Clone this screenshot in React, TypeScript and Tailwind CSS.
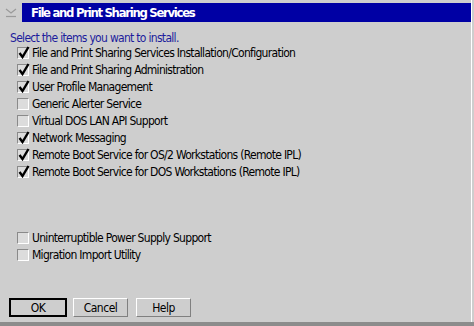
import React from "react";

const items: { label: string; checked: boolean }[] = [
  { label: "File and Print Sharing Services Installation/Configuration", checked: true },
  { label: "File and Print Sharing Administration", checked: true },
  { label: "User Profile Management", checked: true },
  { label: "Generic Alerter Service", checked: false },
  { label: "Virtual DOS LAN API Support", checked: false },
  { label: "Network Messaging", checked: true },
  { label: "Remote Boot Service for OS/2 Workstations (Remote IPL)", checked: true },
  { label: "Remote Boot Service for DOS Workstations (Remote IPL)", checked: true },
];

const items2 = [
  { label: "Uninterruptible Power Supply Support", checked: false },
  { label: "Migration Import Utility", checked: false },
];

function Check({ checked }: { checked: boolean }) {
  return (
    <div className="relative w-[12px] h-[12px] border-t border-l border-[#8a8a8a] border-b border-r border-b-white border-r-white bg-[#dcdcdc] shrink-0">
      {checked && (
        <svg className="absolute left-[0px] top-[-2px]" width="12" height="13" viewBox="0 0 12 13">
          <path d="M1.5 7 L4.5 11 L10.5 1" stroke="#000" strokeWidth="2.4" fill="none" />
        </svg>
      )}
    </div>
  );
}

function Row({ label, checked }: { label: string; checked: boolean }) {
  return (
    <div className="flex items-center h-[17px] pl-[17px] gap-[3px]">
      <Check checked={checked} />
      <span className="text-[12px] leading-none text-black tracking-[-0.7px]">{label}</span>
    </div>
  );
}

function Btn({ label, def }: { label: string; def?: boolean }) {
  return (
    <div
      className={
        "h-[19px] flex items-center justify-center text-[12px] text-black tracking-[-0.5px] " +
        (def ? "border-2 border-black" : "border border-t-white border-l-white border-b-[#808080] border-r-[#808080]")
      }
    >
      <span>{label}</span>
    </div>
  );
}

export default function App() {
  return (
    <div
      className="w-[474px] h-[326px] bg-[#cecece] flex flex-col overflow-hidden"
      style={{ fontFamily: '"DejaVu Sans Condensed", "DejaVu Sans", sans-serif' }}
    >
      <div className="flex-1 flex flex-col border-r border-r-white mr-[2px]">
        <div className="flex items-center h-[23px] pt-[2px]">
          <div className="w-[22px] flex justify-center">
            <svg width="12" height="11" viewBox="0 0 12 11">
              <path d="M1 2 L6 6 L11 2" stroke="#9a9a9a" strokeWidth="1.2" fill="none" />
              <path d="M1 9.5 H11" stroke="#9a9a9a" strokeWidth="1.2" />
            </svg>
          </div>
          <div className="flex-1 h-[19px] bg-[#0000a4] flex items-center pl-[9px] text-white font-bold text-[13px] tracking-[-1.3px]">
            File and Print Sharing Services
          </div>
        </div>
        <div className="pl-[10px] pt-[6px] text-[12px] text-[#1c1c9c] h-[21px] tracking-[-0.7px]">Select the items you want to install.</div>
        <div className="flex flex-col">
          {items.map((it) => (
            <Row key={it.label} {...it} />
          ))}
        </div>
        <div className="h-[49px]" />
        <div className="flex flex-col">
          {items2.map((it) => (
            <Row key={it.label} {...it} />
          ))}
        </div>
        <div className="flex-1" />
        <div className="flex gap-[6px] pl-[9px] pb-[5px]">
          <div className="w-[58px]"><Btn label="OK" def /></div>
          <div className="w-[55px] ml-[0px]"><Btn label="Cancel" /></div>
          <div className="w-[55px] ml-[2px]"><Btn label="Help" /></div>
        </div>
      </div>
      <div className="h-[4px] bg-[#8c8c8c]" />
    </div>
  );
}
